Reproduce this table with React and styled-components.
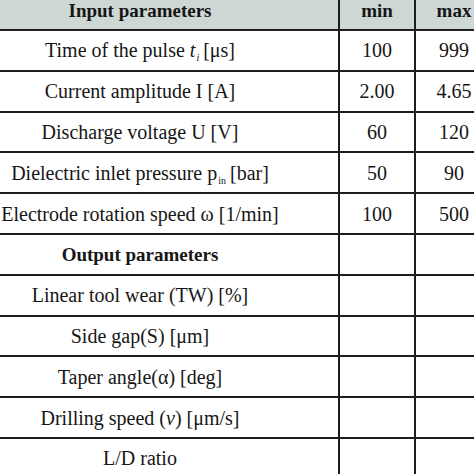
import React from "react";
import styled, { createGlobalStyle } from "styled-components";

const Global = createGlobalStyle`
  html, body { margin: 0; padding: 0; background: #fff; overflow: hidden; }
  body { width: 474px; height: 474px; }
`;

const Table = styled.div`
  display: grid;
  grid-template-columns: 396px 74px 76px;
  grid-template-rows: 36px;
  grid-auto-rows: 38.8px;
  gap: 2px;
  background: #1e1e1e;
  width: max-content;
  margin: -7px 0 0 -58px;
  font-family: "Liberation Serif", "Times New Roman", serif;
  font-size: 20px;
  color: #161616;
`;

const Cell = styled.div`
  display: flex;
  align-items: center;
  justify-content: center;
  white-space: nowrap;
  background: ${(p) => (p.$head ? "#cdd7d3" : "#fff")};
  font-weight: ${(p) => (p.$bold ? 700 : 400)};
  font-size: ${(p) => (p.$bold ? "19px" : "20px")};
  padding-top: ${(p) => (p.$head ? "0" : "1px")};
`;

const Label = styled.span`
  display: inline-block;
`;

const Sub = styled.sub`
  font-size: 10px;
  vertical-align: -4px;
  margin: 0 4px 0 1px;
  line-height: 0;
`;

const Ital = styled.i`
  font-style: italic;
`;

const rows = [
  [<>Time of the pulse <Ital>t</Ital><Sub><Ital>i</Ital></Sub>[μs]</>, "100", "999"],
  ["Current amplitude I [A]", "2.00", "4.65"],
  ["Discharge voltage U [V]", "60", "120"],
  [<>Dielectric inlet pressure p<Sub>in</Sub>[bar]</>, "50", "90"],
  ["Electrode rotation speed ω [1/min]", "100", "500"],
  ["Output parameters", "", "", true],
  ["Linear tool wear (TW) [%]", "", ""],
  ["Side gap(S) [μm]", "", ""],
  ["Taper angle(α) [deg]", "", ""],
  [<>Drilling speed (<Ital>ν</Ital>) [μm/s]</>, "", ""],
  ["L/D ratio", "", ""],
];

export default function App() {
  return (
    <>
      <Global />
      <Table>
        <Cell $head $bold>Input parameters</Cell>
        <Cell $head $bold>min</Cell>
        <Cell $head $bold>max</Cell>
        {rows.map(([label, min, max, bold], i) => (
          <React.Fragment key={i}>
            <Cell $bold={bold}><Label>{label}</Label></Cell>
            <Cell>{min}</Cell>
            <Cell>{max}</Cell>
          </React.Fragment>
        ))}
      </Table>
    </>
  );
}
